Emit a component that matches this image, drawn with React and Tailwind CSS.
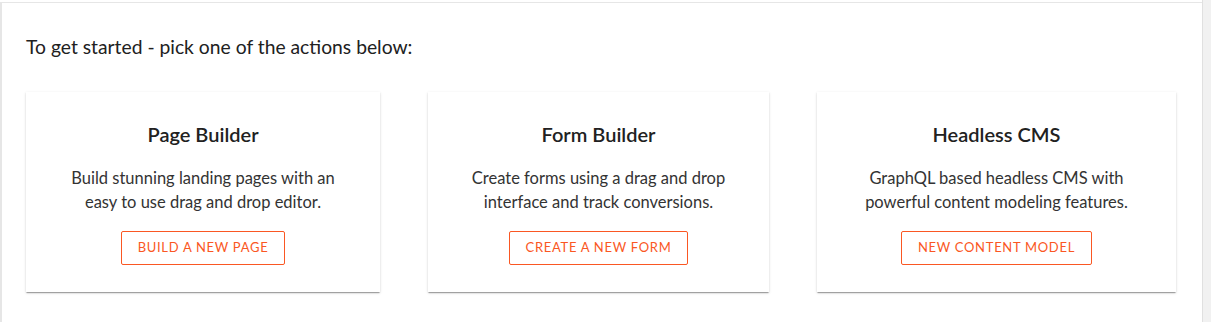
import React from "react";

const actions = [
    {
        title: "Page Builder",
        lines: ["Build stunning landing pages with an", "easy to use drag and drop editor."],
        label: "Build a new page",
        width: "w-[354px]",
    },
    {
        title: "Form Builder",
        lines: ["Create forms using a drag and drop", "interface and track conversions."],
        label: "Create a new form",
        width: "w-[341px]",
    },
    {
        title: "Headless CMS",
        lines: ["GraphQL based headless CMS with", "powerful content modeling features."],
        label: "New content model",
        width: "w-[359px]",
    },
];

const ActionCard = ({ title, lines, label, width }) => (
    <div
        className={`${width} bg-white flex flex-col items-center pt-[30px] pb-[27px] shadow-[0_2px_1px_-1px_rgba(0,0,0,0.2),0_1px_1px_0_rgba(0,0,0,0.14),0_1px_3px_0_rgba(0,0,0,0.12)]`}
    >
        <h3 className="text-[20px] leading-[24px] font-semibold text-[#212121]">{title}</h3>
        <p className="mt-[20px] text-[16.5px] leading-[24px] text-[#333] text-center">
            {lines[0]}
            <br />
            {lines[1]}
        </p>
        <button
            type="button"
            className="mt-[17px] h-[34px] px-[16px] border border-[#fa5723] rounded-[2px] text-[#fa5723] text-[13px] uppercase tracking-[0.7px] bg-white"
        >
            {label}
        </button>
    </div>
);

const App = () => {
    return (
        <div className="flex w-[1211px] h-[322px] bg-white" style={{ fontFamily: "Lato, 'Noto Sans', sans-serif" }}>
            <div className="w-[1202px] h-full mt-[2px] border-t border-l-2 border-[#e6e6e6] px-[24px]">
                {/* Heading */}
                <div className="pt-[32px] text-[19.3px] leading-[24px] text-[#212121]">
                    To get started - pick one of the actions below:
                </div>

                {/* Cards */}
                <div className="flex gap-[48px] mt-[33px]">
                    {actions.map((a) => (
                        <ActionCard key={a.title} {...a} />
                    ))}
                </div>
            </div>
            <div className="flex-1 h-full bg-[#f1f1f1] border-l border-[#e0e0e0]"></div>
        </div>
    );
};

export default App;
